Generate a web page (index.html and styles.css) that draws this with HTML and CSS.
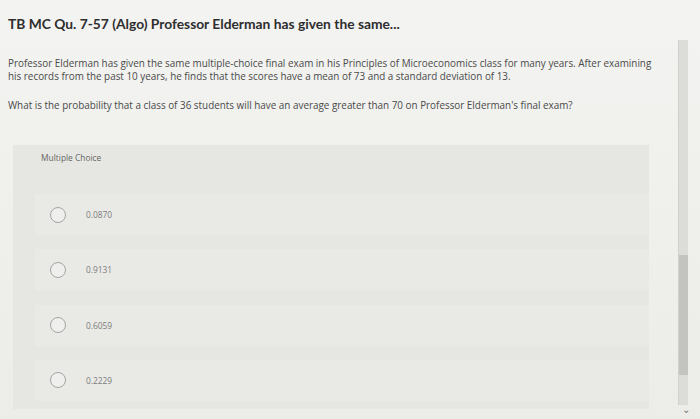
FILE: index.html
```html
<!DOCTYPE html>
<html>
<head>
<meta charset="utf-8">
<link rel="stylesheet" href="styles.css">
</head>
<body>
<div class="page">
  <main class="content">
    <h1 class="title">TB MC Qu. 7-57 (Algo) Professor Elderman has given the same...</h1>
    <p class="para">Professor Elderman has given the same multiple-choice final exam in his Principles of Microeconomics class for many years. After examining his records from the past 10 years, he finds that the scores have a mean of 73 and a standard deviation of 13.</p>
    <p class="para question">What is the probability that a class of 36 students will have an average greater than 70 on Professor Elderman's final exam?</p>
    <section class="mc">
      <div class="mc-label">Multiple Choice</div>
      <div class="options">
        <div class="option"><span class="radio"></span><span class="opt-text">0.0870</span></div>
        <div class="option"><span class="radio"></span><span class="opt-text">0.9131</span></div>
        <div class="option"><span class="radio"></span><span class="opt-text">0.6059</span></div>
        <div class="option"><span class="radio"></span><span class="opt-text">0.2229</span></div>
      </div>
    </section>
  </main>
  <aside class="scrollbar">
    <div class="track"><div class="thumb"></div></div>
    <div class="arrow">&#8964;</div>
  </aside>
</div>
</body>
</html>
```
FILE: styles.css
```css
html, body {
  margin: 0;
  padding: 0;
}
body {
  width: 700px;
  height: 419px;
  overflow: hidden;
  background: linear-gradient(#f3f3f1, #ecece8);
  font-family: Lato, "Liberation Sans", sans-serif;
}
.page {
  display: flex;
  height: 419px;
}
.content {
  flex: 1;
  padding: 0 0 0 8px;
}
.title {
  margin: 16px 0 0 0;
  font-size: 13.8px;
  font-weight: 700;
  color: #2e2e2e;
  line-height: 16px;
}
.para {
  margin: 25px 0 0 0;
  width: 652px;
  font-family: "Open Sans", "Liberation Sans", sans-serif;
  font-size: 9.9px;
  line-height: 13px;
  color: #4a4a4a;
}
.question {
  margin-top: 16px;
}
.mc {
  margin: 33px 0 0 5px;
  width: 636px;
  height: 264px;
  background: #e6e6e2;
  padding: 8px 0 0 0;
  box-sizing: border-box;
}
.mc-label {
  margin-left: 28px;
  font-family: "Open Sans", "Liberation Sans", sans-serif;
  font-size: 8.4px;
  color: #666;
  line-height: 10px;
}
.options {
  display: flex;
  flex-direction: column;
  gap: 14.3px;
  margin: 31px 0 0 22px;
}
.option {
  display: flex;
  align-items: center;
  height: 41px;
  background: #e9e9e6;
  padding-left: 15px;
}
.radio {
  width: 14px;
  height: 14px;
  border-radius: 50%;
  border: 1.3px solid #a4a4a4;
  background: #efefed;
  flex: none;
}
.opt-text {
  margin-left: 20px;
  font-family: "Open Sans", "Liberation Sans", sans-serif;
  font-size: 8.4px;
  color: #7d7d7d;
}
.scrollbar {
  width: 22px;
  display: flex;
  flex-direction: column;
  align-items: flex-start;
  padding-top: 40px;
  box-sizing: border-box;
}
.track {
  width: 9px;
  flex: 1;
  background: #dcdcd9;
  border-left: 1px solid #d0d0cd;
  display: flex;
  flex-direction: column;
  justify-content: flex-end;
  padding-bottom: 30px;
}
.thumb {
  height: 120px;
  background: #c3c3c0;
}
.arrow {
  height: 14px;
  margin-left: 4px;
  font-size: 10px;
  line-height: 8px;
  color: #777;
}
```
